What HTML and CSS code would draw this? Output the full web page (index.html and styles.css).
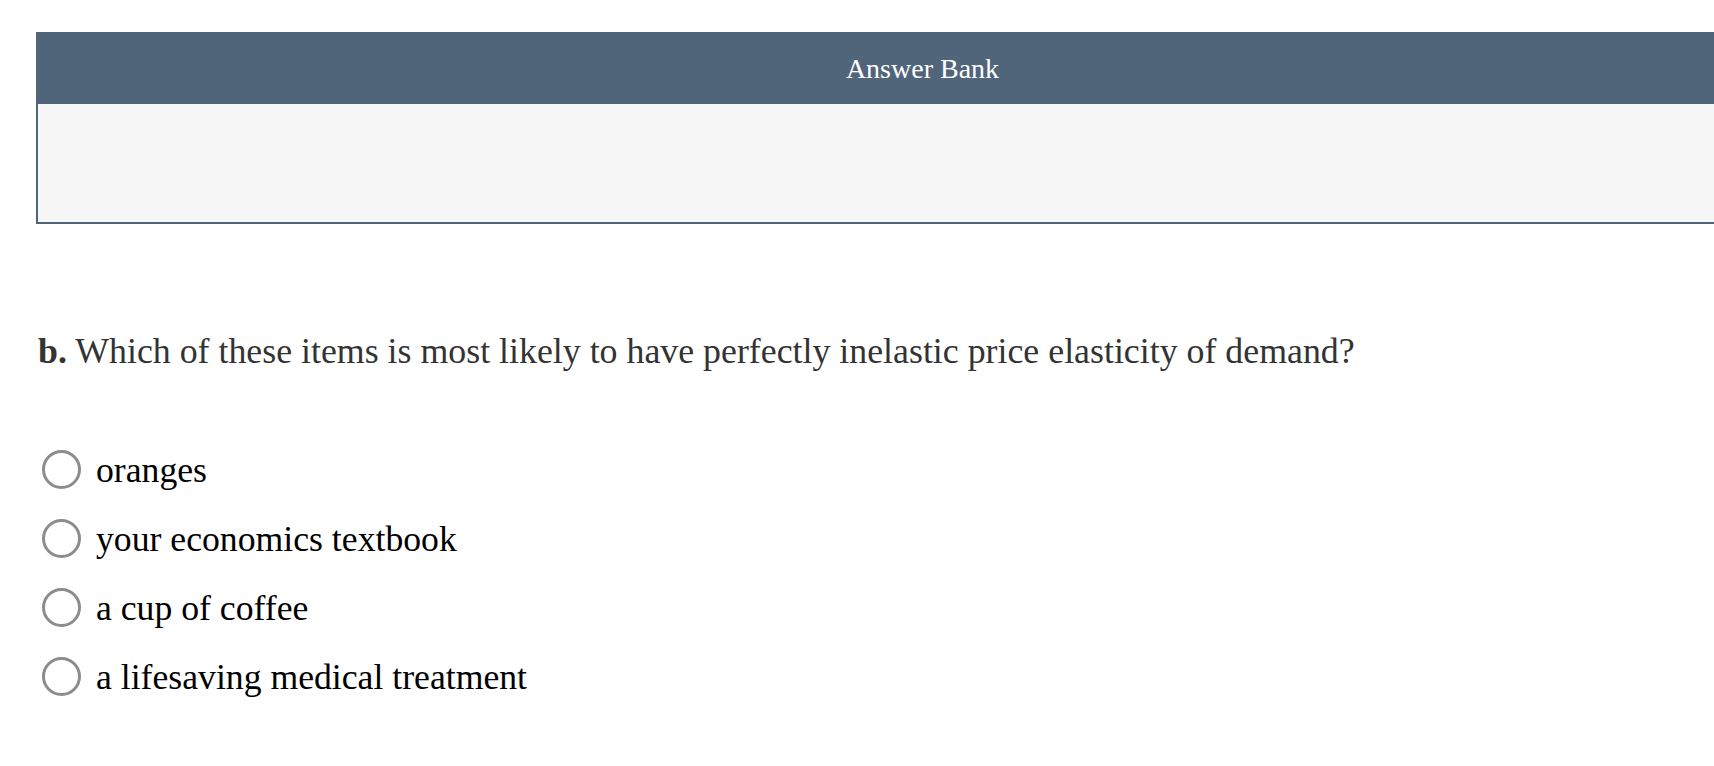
FILE: index.html
```html
<!DOCTYPE html>
<html lang="en">
  <head>
    <meta charset="UTF-8" />
    <meta name="viewport" content="width=device-width, initial-scale=1.0" />
    <title>Answer Bank</title>
    <link rel="stylesheet" href="styles.css">
  </head>
  <body>
    <div class="page">
      <div class="answer-bank">
        <div class="answer-bank-header">Answer Bank</div>
        <div class="answer-bank-body"></div>
      </div>

      <div class="question">
        <p class="question-text">
          <strong>b.</strong> Which of these items is most likely to have perfectly inelastic price elasticity of demand?
        </p>
        <div class="choices">
          <label class="choice">
            <input type="radio" name="q-b" />
            <span>oranges</span>
          </label>
          <label class="choice">
            <input type="radio" name="q-b" />
            <span>your economics textbook</span>
          </label>
          <label class="choice">
            <input type="radio" name="q-b" />
            <span>a cup of coffee</span>
          </label>
          <label class="choice">
            <input type="radio" name="q-b" />
            <span>a lifesaving medical treatment</span>
          </label>
        </div>
      </div>
    </div>
  </body>
</html>
```

FILE: styles.css
```css
body {
  margin: 0;
  overflow: hidden;
  background-color: white;
  font-family: "Liberation Serif", "Times New Roman", serif;
}
.page {
  padding: 32px 0 0 36px;
}

.answer-bank {
  width: 1773px;
  border: 2px solid #506579;
  border-top: none;
  box-sizing: border-box;
}
.answer-bank-header {
  height: 72px;
  margin-left: -2px;
  margin-right: -2px;
  padding-top: 2px;
  box-sizing: border-box;
  background-color: #506579;
  color: white;
  font-size: 28px;
  line-height: 70px;
  text-align: center;
}
.answer-bank-body {
  height: 118px;
  background-color: #f7f7f7;
}

.question {
  margin-top: 106px;
}
.question-text {
  margin: 0;
  padding-left: 2px;
  font-size: 35.85px;
  color: #333;
}
.choices {
  margin-top: 77px;
  display: flex;
  flex-direction: column;
  gap: 28px;
}
.choice {
  display: flex;
  align-items: center;
  gap: 15px;
  height: 41px;
  font-size: 35.7px;
  color: black;
  cursor: pointer;
}
.choice input {
  appearance: none;
  -webkit-appearance: none;
  margin: 0 0 0 6px;
  width: 39px;
  height: 39px;
  border: 3.5px solid #8c8c8c;
  border-radius: 50%;
  box-sizing: border-box;
  background-color: white;
  cursor: pointer;
}
.choice input:checked {
  background: radial-gradient(#506579 40%, white 45%);
}
```
